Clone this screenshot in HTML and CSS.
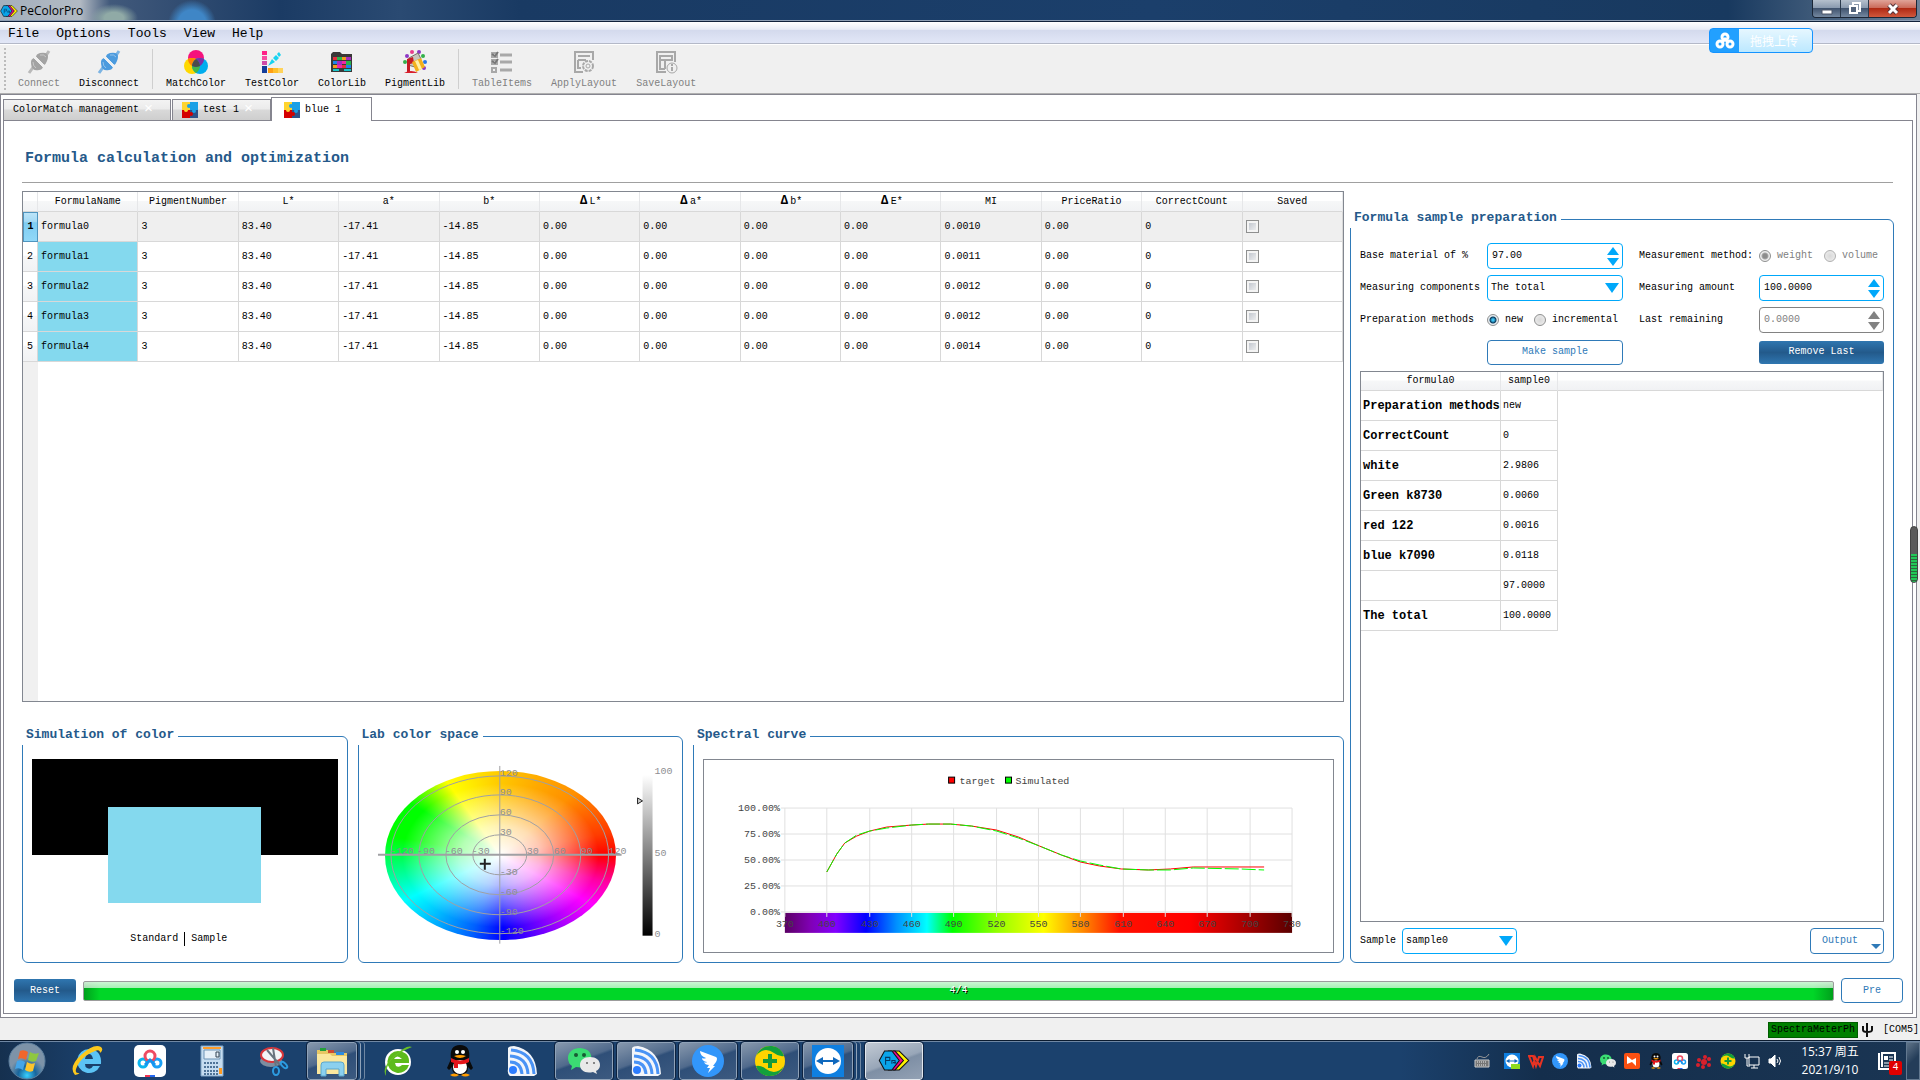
FILE: index.html
```html
<!doctype html>
<html lang="en">
<head>
    <meta charset="utf-8">
    <title>PeColorPro</title>
    <link rel="stylesheet" href="styles.css">
</head>

<body>
<!-- shared icons -->
<svg class="defs" width="0" height="0" aria-hidden="true">
    <symbol id="i-app" viewBox="0 0 30 20">
        <path d="M15 1h5l9 9-9 9h-5l8-9z" fill="#fff200" stroke="#111"/>
        <path d="M10 1h6l8 9-8 9h-6l8-9z" fill="#ec0a8c" stroke="#111"/>
        <path d="M6 1h7l7 9-7 9H6L1 10z" fill="#0aa5ea" stroke="#111"/>
        <path d="M7 14V7h4v3H7M13 13v-3h3v3M14 12h3" fill="none" stroke="#063a63"/>
    </symbol>
    <symbol id="i-puzzle" viewBox="0 0 16 16">
        <path d="M0 0h8v8H0z" fill="#ffd42e"/>
        <path d="M8 0h8v8H8z" fill="#1ba1e6"/>
        <path d="M0 8h8v8H0z" fill="#d40000"/>
        <path d="M8 8h8v8H8z" fill="#2f5288"/>
        <circle cx="7" cy="4" r="2" fill="#1ba1e6"/>
        <circle cx="12" cy="9" r="2" fill="#1ba1e6"/>
        <circle cx="4" cy="8" r="2" fill="#ffd42e"/>
        <circle cx="9" cy="12" r="2" fill="#d40000"/>
    </symbol>
    <symbol id="i-plug" viewBox="0 0 24 24">
        <path d="M2 23l5-7M18 7l4-6" stroke="currentColor" stroke-width="3" opacity=".7"/>
        <path d="M4 12q0-3 3-4l9 9q-1 3-4 3-4 1-6-1t-2-7z" fill="currentColor"/>
        <path d="M9 7q0-3 4-4 5-1 7 1t0 7q-1 3-3 4z" fill="currentColor"/>
        <path d="M7 8l9 9M9 7l8 8" stroke="#fff" opacity=".7"/>
        <path d="M6 12q0 4 3 6M13 5q4-1 6 2" stroke="#fff" fill="none" opacity=".4"/>
    </symbol>
    <symbol id="i-wave" viewBox="0 0 32 32">
        <path d="M2 3Q3 1 8 1Q30 5 31 29L28 31H4Q1 29 2 24z" fill="#f4f6fa"/>
        <circle cx="7" cy="25" r="4" fill="#2d7dff"/>
        <path d="M4 17q11 0 12 12M4 11q17 1 18 18M5 5q22 2 23 24" fill="none" stroke="#4a93f5" stroke-width="3"/>
    </symbol>
    <symbol id="i-wechat" viewBox="0 0 32 28">
        <path d="M12 1C5 1 0 5 0 11q0 5 4 8l-1 4 5-3q12 2 15-6Q25 2 12 1z" fill="#3bdc73"/>
        <circle cx="8" cy="8" r="2" fill="#175c33"/><circle cx="16" cy="8" r="2" fill="#175c33"/>
        <path d="M22 10c-6 0-10 3-10 8s5 9 13 7l4 2-1-3q4-2 4-6c0-5-4-8-10-8z" fill="#e9e9e9"/>
        <circle cx="19" cy="16" r="1" fill="#666"/><circle cx="26" cy="16" r="1" fill="#666"/>
    </symbol>
    <symbol id="i-ding" viewBox="0 0 32 32">
        <circle cx="16" cy="16" r="16" fill="#3296fa"/>
        <path d="M8 6l16 6q2 1 0 5l-3 4h2l-7 7 2-5h-3l2-3q-4 0-5-3 2 1 3 0-5-1-5-4 2 1 4 0Q8 11 8 6z" fill="#fff"/>
    </symbol>
    <symbol id="i-360" viewBox="0 0 32 32">
        <circle cx="16" cy="16" r="15" fill="#ffd400"/>
        <path d="M2 11Q7 0 18 1q9 1 12 10-5 1-10-3Q10 1 2 11zM30 21Q25 32 14 31 5 30 2 21q5-1 10 3 10 7 18-3z" fill="#13a03c"/>
        <path d="M16 9v14M9 16h14" stroke="#159a3c" stroke-width="4"/>
    </symbol>
    <symbol id="i-tv" viewBox="0 0 32 32">
        <path d="M0 0h32v32H0z" fill="#0f7fe0"/>
        <circle cx="16" cy="16" r="13" fill="#fff"/>
        <path d="M4 16l7-4v3h10v-3l7 4-7 4v-3H11v3z" fill="#0f68bd"/>
    </symbol>
    <symbol id="i-baidu" viewBox="0 0 32 32">
        <rect width="32" height="32" rx="5" fill="#fff"/>
        <g fill="none" stroke-width="3">
            <circle cx="9" cy="18" r="4" stroke="#0cb5ee"/>
            <circle cx="23" cy="18" r="4" stroke="#1ba0f5"/>
            <circle cx="16" cy="11" r="5" stroke="#ee4b62"/>
            <path d="M11 20l5-5 5 5" stroke="#1494f0"/>
        </g>
        <path d="M11 30h5v2h-5z" fill="#ee3352"/><path d="M16 30h5v2h-5z" fill="#2367f0"/>
    </symbol>
    <symbol id="i-qq" viewBox="0 0 26 32">
        <path d="M4 14Q2 0 13 0t9 14l4 9-2 2-3-3q0 8-8 8T5 22l-3 3-2-2z" fill="#0a0a0a"/>
        <ellipse cx="13" cy="22" rx="7" ry="7" fill="#fff"/>
        <circle cx="10" cy="7" r="2" fill="#fff"/><circle cx="16" cy="7" r="2" fill="#fff"/>
        <path d="M7 11q6-2 12 0-6 4-12 0zM3 30q4-3 9 0-4 3-9 0zM14 30q5-3 9 0-5 3-9 0z" fill="#ff9c00"/>
        <path d="M4 13q9 5 18 0v4q-5 3-11 2v4H7v-5l-3-1z" fill="#e5151b"/>
    </symbol>
</svg>

<header class="titlebar">
    <svg class="app-icon" width="18" height="14"><use href="#i-app"/></svg>
    <h1 class="app-name">PeColorPro</h1>
    <div class="win-buttons">
        <button class="win-btn" aria-label="Minimize"><svg width="12" height="12"><path d="M1 7h10v4H1z" fill="#fff" stroke="#4a5568"/></svg></button>
        <button class="win-btn" aria-label="Restore"><svg width="14" height="13"><path d="M5 1h7v8H5z" fill="#8795a8" stroke="#fff" stroke-width="2"/><path d="M2 4h7v7H2z" fill="#53647c" stroke="#fff" stroke-width="2"/></svg></button>
        <button class="win-btn win-close" aria-label="Close"><svg width="12" height="12"><path d="M2 2l8 8M10 2l-8 8" stroke="#56343a" stroke-width="5"/><path d="M2 2l8 8M10 2l-8 8" stroke="#fff" stroke-width="3"/></svg></button>
    </div>
</header>

<nav class="menubar">
    <button>File</button>
    <button>Options</button>
    <button>Tools</button>
    <button>View</button>
    <button>Help</button>
</nav>

<div class="toolbar">
    <span class="grip"></span>
    <button class="tool tool-off" disabled><svg width="24" height="24" color="#a3a3a3"><use href="#i-plug"/></svg>Connect</button>
    <button class="tool"><svg width="24" height="24" color="#4c9bde"><use href="#i-plug"/></svg>Disconnect</button>
    <span class="sep"></span>
    <button class="tool">
        <svg width="24" height="24" viewBox="0 0 24 24">
            <circle cx="12" cy="8" r="8" fill="#f5127c"/>
            <circle cx="8" cy="16" r="8" fill="#ffd800"/>
            <circle cx="16" cy="16" r="8" fill="#00adee"/>
            <path d="M4 9q4-2 8 0-4 3-4 7-4-3-4-7z" fill="#ff8500"/>
            <path d="M12 9q4-2 8 0 0 4-4 7 0-4-4-7z" fill="#7a30a8"/>
            <path d="M8 16q4 1 8 0 0 4-4 7-4-3-4-7z" fill="#42b649"/>
            <path d="M12 9q4 3 4 7-4 2-8 0 0-4 4-7z" fill="#4d4a4c"/>
        </svg>MatchColor
    </button>
    <button class="tool">
        <svg width="24" height="24" viewBox="0 0 24 24">
            <path d="M2 1h5v4H2z" fill="#ff2087"/><path d="M2 6h5v4H2z" fill="#f64ba0"/><path d="M2 11h5v4H2z" fill="#d04ba8"/>
            <path d="M2 16h5v7H2z" fill="#143d9a"/><path d="M8 18h5v5H8z" fill="#ff9e12"/><path d="M13 18h5v5h-5z" fill="#ffc02a"/><path d="M18 18h5v5h-5z" fill="#ffd35a"/>
            <path d="M8 16l4-7 3 3zM13 8l3-3 3 3-3 3zM17 4l2-2 2 3-2 2z" fill="#18d3f0"/>
        </svg>TestColor
    </button>
    <button class="tool">
        <svg width="24" height="24" viewBox="0 0 24 24">
            <path d="M1 4l2-2h7l2 2h10v18H1z" fill="#3b3838"/>
            <path d="M3 7h4v3H3zM12 15h4v3h-4z" fill="#e52c3e"/><path d="M7 7h5v3H7zM16 11h5v4h-5z" fill="#28b34b"/>
            <path d="M12 7h4v3h-4zM3 15h4v3H3z" fill="#f49a1b"/><path d="M16 7h5v3h-5zM7 11h5v4H7z" fill="#a52cc0"/>
            <path d="M3 11h4v3H3zM16 15h5v3h-5z" fill="#1d85e8"/><path d="M12 11h4v3h-4zM7 15h5v3H7z" fill="#f227a4"/>
            <path d="M3 19h6v2H3zM14 19h7v2h-7z" fill="#18c6c8"/>
        </svg>ColorLib
    </button>
    <button class="tool">
        <svg width="24" height="24" viewBox="0 0 24 24">
            <g fill="#33b04a"><circle cx="2" cy="12" r="2"/><circle cx="20" cy="6" r="2"/></g>
            <g fill="#8d37c6"><circle cx="4" cy="6" r="2"/><circle cx="16" cy="2" r="2"/><circle cx="21" cy="18" r="2"/></g>
            <circle cx="22" cy="12" r="2" fill="#2a77e8"/><circle cx="9" cy="2" r="2" fill="#e93d8c"/>
            <path d="M6 8l9-5 3 6-6 8-7-2z" fill="#c9c5be" stroke="#77716a"/>
            <path d="M4 9l6-2 1 6-4 1v8H4z" fill="#c51a24"/>
            <path d="M9 12l9-4 4 9-9 5z" fill="#f3b01c"/><path d="M12 11l3-1 4 9-3 1z" fill="#fff0a8"/>
            <path d="M1 23q7-4 14 0z" fill="#d81e2a"/>
        </svg>PigmentLib
    </button>
    <span class="sep"></span>
    <button class="tool tool-off" disabled>
        <svg width="24" height="24" viewBox="0 0 24 24" fill="none" stroke="#a8a8a8" stroke-width="2">
            <path d="M10 5h12M10 12h12M10 20h12" stroke-width="3"/><path d="M2 3h5v4H2zM2 10h5v4H2zM2 18h4v4H2z"/><path d="M2 4l3 2 3-4M2 11l3 2 3-4" stroke="#777"/>
        </svg>TableItems
    </button>
    <button class="tool tool-off" disabled>
        <svg width="24" height="24" viewBox="0 0 24 24" fill="none" stroke="#a8a8a8" stroke-width="2">
            <path d="M11 22H3V2h18v8M6 6h12M6 10h8M6 10v8h3"/><circle cx="16" cy="16" r="5" stroke-dasharray="3 1"/><circle cx="16" cy="16" r="2" stroke-width="1"/>
        </svg>ApplyLayout
    </button>
    <button class="tool tool-off" disabled>
        <svg width="24" height="24" viewBox="0 0 24 24" fill="none" stroke="#a8a8a8" stroke-width="2">
            <path d="M12 22H3V2h18v10M6 6h12v4H6zM6 11v8h5M11 10v9"/><circle cx="18" cy="18" r="5" stroke-width="1"/><path d="M18 14v2M18 17v4"/>
        </svg>SaveLayout
    </button>
</div>

<main class="workspace">
    <div class="tabs" role="tablist">
        <button class="tab" role="tab">ColorMatch management <span class="tab-x">×</span></button>
        <button class="tab" role="tab"><svg width="16" height="16"><use href="#i-puzzle"/></svg>test 1 <span class="tab-x">×</span></button>
        <button class="tab tab-on" role="tab" aria-selected="true"><svg width="16" height="16"><use href="#i-puzzle"/></svg>blue 1</button>
    </div>

    <section class="pane">
        <h2 class="pane-title">Formula calculation and optimization</h2>

        <div class="columns">
            <div class="left">
                <div class="grid-frame">
                    <table class="formulas">
                        <thead>
                        <tr>
                            <th class="num"></th><th>FormulaName</th><th>PigmentNumber</th><th>L*</th><th>a*</th><th>b*</th>
                            <th><span class="delta">Δ</span>L*</th><th><span class="delta">Δ</span>a*</th><th><span class="delta">Δ</span>b*</th><th><span class="delta">Δ</span>E*</th>
                            <th>MI</th><th>PriceRatio</th><th>CorrectCount</th><th>Saved</th>
                        </tr>
                        </thead>
                        <tbody>
                        <tr class="current"><th class="num">1</th><td>formula0</td><td>3</td><td>83.40</td><td>-17.41</td><td>-14.85</td><td>0.00</td><td>0.00</td><td>0.00</td><td>0.00</td><td>0.0010</td><td>0.00</td><td>0</td><td><input type="checkbox" aria-label="formula0 saved"></td></tr>
                        <tr><th class="num">2</th><td class="swatch">formula1</td><td>3</td><td>83.40</td><td>-17.41</td><td>-14.85</td><td>0.00</td><td>0.00</td><td>0.00</td><td>0.00</td><td>0.0011</td><td>0.00</td><td>0</td><td><input type="checkbox" aria-label="formula1 saved"></td></tr>
                        <tr><th class="num">3</th><td class="swatch">formula2</td><td>3</td><td>83.40</td><td>-17.41</td><td>-14.85</td><td>0.00</td><td>0.00</td><td>0.00</td><td>0.00</td><td>0.0012</td><td>0.00</td><td>0</td><td><input type="checkbox" aria-label="formula2 saved"></td></tr>
                        <tr><th class="num">4</th><td class="swatch">formula3</td><td>3</td><td>83.40</td><td>-17.41</td><td>-14.85</td><td>0.00</td><td>0.00</td><td>0.00</td><td>0.00</td><td>0.0012</td><td>0.00</td><td>0</td><td><input type="checkbox" aria-label="formula3 saved"></td></tr>
                        <tr><th class="num">5</th><td class="swatch">formula4</td><td>3</td><td>83.40</td><td>-17.41</td><td>-14.85</td><td>0.00</td><td>0.00</td><td>0.00</td><td>0.00</td><td>0.0014</td><td>0.00</td><td>0</td><td><input type="checkbox" aria-label="formula4 saved"></td></tr>
                        </tbody>
                    </table>
                </div>

                <div class="charts">
                    <fieldset class="box">
                        <legend>Simulation of color</legend>
                        <div class="sim">
                            <div class="sim-back"></div>
                            <div class="sim-front"></div>
                            <p class="sim-label"><span>Standard</span><span>Sample</span></p>
                        </div>
                    </fieldset>

                    <fieldset class="box">
                        <legend>Lab color space</legend>
                        <div class="lab">
                            <div class="wheel"></div>
                            <svg class="lab-axes" viewBox="0 0 324 224">
                                <defs>
                                    <linearGradient id="grey" x2="0" y2="1"><stop offset="0" stop-color="#fff"/><stop offset="1" stop-color="#000"/></linearGradient>
                                </defs>
                                <g fill="none" stroke="#a0a0a4">
                                    <ellipse cx="141" cy="119" rx="109" ry="79"/><ellipse cx="141" cy="119" rx="81" ry="60"/>
                                    <ellipse cx="141" cy="119" rx="54" ry="40"/><ellipse cx="141" cy="119" rx="27" ry="20"/>
                                    <path d="M19 119h244" stroke-width="2"/><path d="M141 30v178"/>
                                </g>
                                <g class="lab-text">
                                    <text x="141" y="40">120</text><text x="141" y="59">90</text><text x="141" y="79">60</text><text x="141" y="99">30</text>
                                    <text x="141" y="139">-30</text><text x="141" y="159">-60</text><text x="141" y="179">-90</text><text x="141" y="198">-120</text>
                                    <text x="31" y="118">-120</text><text x="58" y="118">-90</text><text x="86" y="118">-60</text><text x="113" y="118">-30</text>
                                    <text x="168" y="118">30</text><text x="195" y="118">60</text><text x="222" y="118">90</text><text x="250" y="118">120</text>
                                    <text x="296" y="38">100</text><text x="296" y="120">50</text><text x="296" y="201">0</text>
                                </g>
                                <path d="M126 123v11M121 128h11" stroke="#222" stroke-width="2"/>
                                <rect x="284" y="39" width="10" height="161" fill="url(#grey)"/>
                                <path d="M279 62l5 3-5 3z" fill="#ccc" stroke="#222"/>
                            </svg>
                        </div>
                    </fieldset>

                    <fieldset class="box">
                        <legend>Spectral curve</legend>
                        <div class="spectral">
                            <svg class="curve" viewBox="0 0 630 192">
                                <defs>
                                    <linearGradient id="rainbow">
                                        <stop offset="0" stop-color="#5a0064"/><stop offset=".05" stop-color="#8000b4"/><stop offset=".1" stop-color="#8200ff"/><stop offset=".16" stop-color="#0000ff"/>
                                        <stop offset=".22" stop-color="#0090ff"/><stop offset=".28" stop-color="#00ffff"/><stop offset=".33" stop-color="#00ff00"/><stop offset=".42" stop-color="#96ff00"/>
                                        <stop offset=".51" stop-color="#ffff00"/><stop offset=".58" stop-color="#ff9600"/><stop offset=".66" stop-color="#ff1000"/><stop offset=".8" stop-color="#ff0000"/>
                                        <stop offset="1" stop-color="#5a0000"/>
                                    </linearGradient>
                                </defs>
                                <rect x="245" y="17" width="6" height="6" fill="#f00" stroke="#000"/><text x="256" y="24">target</text>
                                <rect x="302" y="17" width="6" height="6" fill="#0f0" stroke="#000"/><text x="312" y="24">Simulated</text>
                                <rect x="81" y="153" width="508" height="20" fill="url(#rainbow)"/>
                                <path class="rules" d="M77 48h512M77 74h512M77 100h512M77 126h512M77 152h512M81 48v109M123 48v109M166 48v109M208 48v109M250 48v109M293 48v109M335 48v109M377 48v109M420 48v109M462 48v109M504 48v109M547 48v109M589 48v109"/>
                                <g text-anchor="end"><text x="76" y="51">100.00%</text><text x="76" y="77">75.00%</text><text x="76" y="103">50.00%</text><text x="76" y="129">25.00%</text><text x="76" y="155">0.00%</text></g>
                                <g text-anchor="middle">
                                    <text x="81" y="167">370</text><text x="123" y="167">400</text><text x="166" y="167">430</text><text x="208" y="167">460</text><text x="250" y="167">490</text>
                                    <text x="293" y="167">520</text><text x="335" y="167">550</text><text x="377" y="167">580</text><text x="420" y="167">610</text><text x="462" y="167">640</text>
                                    <text x="504" y="167">670</text><text x="547" y="167">700</text><text x="589" y="167">730</text>
                                </g>
                                <path d="M123 112L133 94L141 83L153 76L166 71L183 67L208 65L225 64L247 64L268 66L293 70L315 77L336 86L358 95L377 102L396 106L418 109L445 110L467 109L490 107L561 107" fill="none" stroke="#f00"/>
                                <path d="M123 112L133 94L141 83L153 75L166 71L183 68L208 65L225 64L247 64L268 66L293 71L315 78L336 86L358 95L377 101L396 105L418 109L445 110L467 110L490 108L537 109L561 110" fill="none" stroke="#0f0" stroke-dasharray="14 3"/>
                            </svg>
                        </div>
                    </fieldset>
                </div>
            </div>

            <fieldset class="box sample-box">
                <legend>Formula sample preparation</legend>
                <div class="sample">
                    <form class="form">
                        <label for="base">Base material of %</label>
                        <div class="spin"><input id="base" type="text" value="97.00"><button type="button" class="up" aria-label="Increase"></button><button type="button" class="down" aria-label="Decrease"></button></div>
                        <span class="second">Measurement method:</span>
                        <div class="radios">
                            <input type="radio" name="method" id="weight" checked disabled><label for="weight">weight</label>
                            <input type="radio" name="method" id="volume" disabled><label for="volume">volume</label>
                        </div>

                        <label for="components">Measuring components</label>
                        <div class="pick"><select id="components"><option>The total</option></select></div>
                        <label class="second" for="amount">Measuring amount</label>
                        <div class="spin"><input id="amount" type="text" value="100.0000"><button type="button" class="up" aria-label="Increase"></button><button type="button" class="down" aria-label="Decrease"></button></div>

                        <span>Preparation methods</span>
                        <div class="radios">
                            <input type="radio" name="prep" id="new" checked><label for="new">new</label>
                            <input type="radio" name="prep" id="incremental"><label for="incremental">incremental</label>
                        </div>
                        <label class="second" for="remaining">Last remaining</label>
                        <div class="spin spin-off"><input id="remaining" type="text" value="0.0000" disabled><button type="button" class="up" aria-label="Increase" disabled></button><button type="button" class="down" aria-label="Decrease" disabled></button></div>

                        <span></span>
                        <button type="button" class="btn">Make sample</button>
                        <span></span>
                        <button type="button" class="btn btn-solid">Remove Last</button>
                    </form>

                    <div class="sample-frame">
                        <table class="samples">
                            <thead><tr><th>formula0</th><th>sample0</th><th></th></tr></thead>
                            <tbody>
                            <tr><th>Preparation methods</th><td>new</td></tr>
                            <tr><th>CorrectCount</th><td>0</td></tr>
                            <tr><th>white</th><td>2.9806</td></tr>
                            <tr><th>Green k8730</th><td>0.0060</td></tr>
                            <tr><th>red 122</th><td>0.0016</td></tr>
                            <tr><th>blue k7090</th><td>0.0118</td></tr>
                            <tr><th></th><td>97.0000</td></tr>
                            <tr><th>The total</th><td>100.0000</td></tr>
                            </tbody>
                        </table>
                    </div>

                    <div class="sample-foot">
                        <label for="sample">Sample</label>
                        <div class="pick"><select id="sample"><option>sample0</option></select></div>
                        <button class="btn output">Output</button>
                    </div>
                </div>
            </fieldset>
        </div>

        <div class="progress-row">
            <button class="btn btn-solid">Reset</button>
            <div class="progress" role="progressbar" aria-valuemin="0" aria-valuemax="4" aria-valuenow="4" aria-label="Formulas">4/4</div>
            <button class="btn">Pre</button>
        </div>
    </section>
</main>

<footer class="statusbar">
    <span class="device">SpectraMeterPh</span>
    <svg width="11" height="14" viewBox="0 0 11 14" fill="none" stroke="#111" stroke-width="2"><path d="M5 0v14M1 3v4q0 2 4 2 5 0 5-2V3"/></svg>
    <span class="port">[COM5]</span>
</footer>

<div class="taskbar">
    <button class="start" aria-label="Start">
        <svg width="38" height="38" viewBox="0 0 38 38">
            <defs><radialGradient id="orb" cy=".9"><stop offset="0" stop-color="#38d0ff"/><stop offset=".5" stop-color="#18659c"/><stop offset="1" stop-color="#7d93a8"/></radialGradient></defs>
            <circle cx="19" cy="19" r="18" fill="url(#orb)" stroke="#5d7f9e"/>
            <path d="M12 9q4-2 8 1l-2 8q-4-3-8-1z" fill="#f0662c"/><path d="M22 10q4 3 9 1l-3 8q-4 2-8-1z" fill="#8fc73f"/>
            <path d="M9 19q4-2 8 1l-2 8q-4-3-8-1z" fill="#45a5e8"/><path d="M19 20q4 3 8 1l-2 8q-4 2-8-1z" fill="#fdc52c"/>
        </svg>
    </button>
    <button class="task" aria-label="Internet Explorer">
        <svg width="32" height="32" viewBox="0 0 32 32"><path d="M17 4A12 12 0 1 0 28 21H21q-2 4-6 2-2-1-2-4h16Q30 5 17 4zM13 14q1-5 4-5t4 5z" fill="#5cc3f5"/><path d="M3 30Q-4 22 9 10T29 2Q32 5 28 8 28 4 23 6 12 10 7 18 1 28 6 28 10 28 3 30z" fill="#fcc81c"/></svg>
    </button>
    <button class="task" aria-label="Netdisk"><svg width="32" height="32"><use href="#i-baidu"/></svg></button>
    <button class="task" aria-label="Calculator">
        <svg width="32" height="32" viewBox="0 0 32 32"><path d="M5 1h22v30H5z" fill="#c5dcf0" stroke="#7ea3c4"/><path d="M8 5h16v9H8z" fill="#e6f0f8" stroke="#6d93b5"/><path d="M7 2h18v2H7z" fill="#ff9d2b"/><path d="M20 7h3v5h-3z" fill="none" stroke="#345"/><path d="M8 18h15M8 22h15M8 26h15M8 29h15" stroke="#4f7498" stroke-width="2" stroke-dasharray="2 1"/><path d="M23 23h3v6h-3z" fill="#ff9a20"/></svg>
    </button>
    <button class="task" aria-label="Snipping Tool">
        <svg width="32" height="32" viewBox="0 0 32 32"><ellipse cx="13" cy="16" rx="11" ry="6" fill="#7d8da0"/><ellipse cx="14" cy="10" rx="11" ry="7" fill="#f2f4f6" stroke="#d8353a" stroke-width="2"/><path d="M9 5l13 15M15 3l3 19" stroke="#69737d" stroke-width="2"/><ellipse cx="26" cy="20" rx="2" ry="4" transform="rotate(-45 26 20)" fill="none" stroke="#2c9be0" stroke-width="2"/><ellipse cx="18" cy="26" rx="3" ry="4" fill="none" stroke="#2c9be0" stroke-width="2"/></svg>
    </button>
    <button class="task open stack" aria-label="Explorer">
        <svg width="32" height="32" viewBox="0 0 32 32"><path d="M1 5h12l2 3h16v20H1z" fill="#e8c864"/><path d="M4 3h6v3H4z" fill="#24a03a"/><path d="M12 5h6v3h-6z" fill="#cf4a31"/><path d="M20 7h8v3h-8z" fill="#2d8be0"/><path d="M1 9h13l2 2h15v18H1z" fill="#fbe79e"/><path d="M5 31V20q0-3 3-3h17q3 0 3 3v11h-5v-7H10v7z" fill="#8bd0ef" stroke="#5aa6cd"/></svg>
    </button>
    <button class="task" aria-label="Browser">
        <svg width="32" height="32" viewBox="0 0 32 32"><circle cx="16" cy="17" r="13" fill="#fff"/><path d="M16 6a11 11 0 1 0 11 14h-7q-3 3-6 1l-1-3h14Q28 7 16 6zM12 14q3-5 8 0z" fill="#5dbb1c"/><path d="M4 31Q-1 23 12 11T30 2Q14 8 7 18q-4 8-3 13z" fill="#69c026"/></svg>
    </button>
    <button class="task" aria-label="QQ"><svg width="32" height="32"><use href="#i-qq"/></svg></button>
    <button class="task" aria-label="Screen share"><svg width="32" height="32"><use href="#i-wave"/></svg></button>
    <button class="task open" aria-label="WeChat"><svg width="32" height="32"><use href="#i-wechat"/></svg></button>
    <button class="task open" aria-label="Screen share"><svg width="32" height="32"><use href="#i-wave"/></svg></button>
    <button class="task open" aria-label="DingTalk"><svg width="32" height="32"><use href="#i-ding"/></svg></button>
    <button class="task open" aria-label="360"><svg width="32" height="32"><use href="#i-360"/></svg></button>
    <button class="task open stack" aria-label="TeamViewer"><svg width="32" height="32"><use href="#i-tv"/></svg></button>
    <button class="task open active" aria-label="PeColorPro"><svg width="32" height="21"><use href="#i-app"/></svg></button>

    <div class="tray">
        <svg class="keyboard" width="16" height="16" viewBox="0 0 16 16"><path d="M1 7h14v7H1z" fill="#777" stroke="#ccc"/><path d="M3 9h10M3 12h10" stroke="#eee" stroke-dasharray="1 1"/><path d="M3 6q1-4 5-2t7-3" fill="none" stroke="#999"/></svg>
        <svg width="16" height="16"><use href="#i-tv"/><path d="M7 11h9v5H7z" fill="#8fdc1e"/></svg>
        <svg width="16" height="16" viewBox="0 0 16 16" fill="none" stroke="#e83323" stroke-width="2"><path d="M1 3h4l3 10 3-9h4l-3 9-5-9-2 9z"/></svg>
        <svg width="16" height="16"><use href="#i-ding"/></svg>
        <svg width="16" height="16"><use href="#i-wave"/></svg>
        <svg width="16" height="16"><use href="#i-wechat"/></svg>
        <svg width="16" height="16" viewBox="0 0 16 16"><rect width="16" height="16" rx="2" fill="#fb5012"/><path d="M3 3l5 4 4-2v8L8 9l-5 2z" fill="#fff"/></svg>
        <svg width="16" height="16"><use href="#i-qq"/></svg>
        <svg width="16" height="16"><use href="#i-baidu"/></svg>
        <svg width="16" height="16" viewBox="0 0 16 16" fill="#d8202c"><circle cx="8" cy="9" r="3"/><circle cx="3" cy="7" r="2"/><circle cx="2" cy="12" r="2"/><circle cx="7" cy="14" r="2"/><circle cx="13" cy="12" r="2"/><circle cx="13" cy="6" r="2"/><circle cx="9" cy="4" r="2"/></svg>
        <svg width="16" height="16"><use href="#i-360"/></svg>
        <svg width="16" height="16" viewBox="0 0 16 16" fill="none" stroke="#fff"><path d="M5 4h10v8H5zM7 15h7M10 12v3M1 1v4h4V1M3 5v8h3"/></svg>
        <svg width="16" height="16" viewBox="0 0 16 16" fill="none" stroke="#fff"><path d="M1 6h2l4-4v12l-4-4H1z" fill="#fff"/><path d="M9 6q2 2 0 4M11 4q3 4 0 8"/></svg>
    </div>
    <time class="clock" datetime="2021-09-10T15:37"><span>15:37 周五</span><span>2021/9/10</span></time>
    <div class="notice">
        <svg width="18" height="18" viewBox="0 0 18 18"><path d="M1 1v16h16V1H4v14" fill="none" stroke="#fff" stroke-width="2"/><path d="M6 4h4v4H6z" fill="#fff"/><path d="M11 5h4M11 8h4M6 11h9M6 14h6" stroke="#fff"/></svg>
        <span class="badge">4</span>
    </div>
    <button class="show-desktop" aria-label="Show desktop"></button>
</div>

<!-- floating widgets -->
<button class="upload">
    <svg width="20" height="18" viewBox="0 0 20 18" fill="none" stroke="#fff" stroke-width="3"><circle cx="10" cy="5" r="3"/><circle cx="5" cy="12" r="3"/><circle cx="15" cy="12" r="3"/><path d="M7 10l3-3 3 3"/></svg>
    <span>拖拽上传</span>
</button>
<div class="meter"></div>
</body>
</html>
```

FILE: styles.css
```css
* {
    box-sizing: border-box;
}

body {
    margin: 0;
    min-height: 100vh;
    display: flex;
    flex-direction: column;
    position: relative;
    background: #f0f0f0;
    color: #000;
    font: 10px/14px "Liberation Mono", "Noto Sans CJK SC", monospace;
}

button,
input,
select {
    font: inherit;
    color: inherit;
    margin: 0;
}

button {
    padding: 0;
    border: 0;
    background: none;
}

.defs {
    position: absolute;
}

/* title bar */
.titlebar {
    display: flex;
    align-items: center;
    height: 22px;
    border-bottom: 1px solid #10213a;
    box-shadow: inset 0 -1px #8c9db3;
    background:
        radial-gradient(circle at 192px 24px, #3f86c6 14px, transparent 24px),
        radial-gradient(ellipse 24px 14px at 114px 18px, #90aaa6 40%, transparent),
        linear-gradient(90deg, #a4afbc, #b2bac3 80px, #41597b 110px, #1b3b64 280px, #2a4a72 400px, #193a63 520px, #1b3f6b 60%, #18395f 90%, #6d8299);
}

.app-icon {
    margin: 0 2px 0 0;
}

.app-name {
    margin: 0;
    font: 12px/16px "Open Sans", sans-serif;
}

.win-buttons {
    display: flex;
    align-self: flex-start;
    margin: 0 3px 0 auto;
    border: 1px solid #1b2636;
    border-top: 0;
    border-radius: 0 0 4px 4px;
    overflow: hidden;
}

.win-btn {
    display: grid;
    place-items: center;
    width: 28px;
    height: 17px;
    border-right: 1px solid #2b3a4d;
    background: linear-gradient(#b5c0cd, #8b9bb0 45%, #41546f 50%, #7488a0);
}

.win-close {
    width: 47px;
    border-right: 0;
    background: linear-gradient(#e0a398, #cb6b5b 45%, #b02a14 50%, #d0583c);
}

/* menu and tool bar */
.menubar {
    display: flex;
    gap: 1px;
    height: 22px;
    border-bottom: 1px solid #b4b9c8;
    background: linear-gradient(#fff, #e8ecf6 35%, #d4daed 40%, #e2e7f7);
    font-size: 13px;
}

.menubar button {
    padding: 3px 8px 0;
}

.toolbar {
    display: flex;
    align-items: center;
    gap: 1px;
    height: 50px;
    padding: 0 4px;
    border-top: 1px solid #fff;
    border-bottom: 1px solid #b0b0b0;
}

.grip {
    width: 2px;
    height: 42px;
    margin-right: 2px;
    border-left: 2px dotted #bcbcbc;
}

.tool {
    display: flex;
    flex-direction: column;
    align-items: center;
    gap: 3px;
    padding: 2px 9px 0;
}

.tool-off {
    color: #808080;
}

.sep {
    width: 1px;
    height: 40px;
    margin: 0 3px;
    background: #cfcfcf;
}

/* tabs */
.workspace {
    flex: 1;
    display: flex;
    flex-direction: column;
    margin: 0 3px 0 0;
    padding: 1px 3px 3px 2px;
    border: 1px solid #85858f;
    background: #fff;
}

.tabs {
    display: flex;
    align-items: flex-end;
    gap: 1px;
    height: 24px;
}

.tab {
    display: flex;
    align-items: center;
    gap: 5px;
    height: 21px;
    padding: 0 17px 0 9px;
    border: 1px solid #85858f;
    border-bottom: 0;
    background: linear-gradient(#f3f3f3, #ebebeb 45%, #d9d9d9 50%, #cecece);
}

.tab-x {
    color: #fff;
    font-size: 15px;
}

.tab-on {
    height: 24px;
    min-width: 101px;
    margin: 0 0 -1px -1px;
    padding: 0 12px;
    background: #fff;
    z-index: 1;
}

.pane {
    flex: 1;
    display: flex;
    flex-direction: column;
    padding: 28px 9px 10px 10px;
    border: 1px solid #85858f;
}

.pane-title {
    margin: 0 10px 8px 8px;
    padding: 0 3px 13px;
    border-bottom: 1px solid #a0a0a0;
    color: #25598a;
    font-size: 15px;
    line-height: 20px;
}

.columns {
    flex: 1;
    display: grid;
    grid-template-columns: minmax(0, 1fr) 544px;
    gap: 6px;
    margin: 0 9px 15px 8px;
}

.left {
    display: flex;
    flex-direction: column;
    gap: 25px;
}

/* formula table */
.grid-frame {
    flex: 1;
    border: 1px solid #828790;
    background: linear-gradient(90deg, #f0f0f0 15px, #fff 15px);
}

table {
    border-collapse: separate;
    border-spacing: 0;
}

th,
td {
    border-right: 1px solid #d8d8d8;
    border-bottom: 1px solid #d8d8d8;
}

thead th {
    height: 20px;
    padding: 0;
    border-right-color: #e6e7e9;
    background: linear-gradient(#fff 45%, #f6f7f8 50%, #f1f2f4);
    font-weight: normal;
}

.formulas {
    width: 100%;
    table-layout: fixed;
}

.formulas td {
    height: 30px;
    padding: 0 3px;
}

.formulas .num {
    width: 15px;
    padding: 0;
    background: linear-gradient(#fff 45%, #f6f7f8 50%, #f1f2f4);
    font-weight: normal;
}

.formulas .current {
    background: #efefef;
}

.formulas .current .num {
    border: 1px solid #4f95bf;
    background: linear-gradient(#bce4f8, #a5daf5 30%, #7fcdf2 35%, #91d8f8);
    font-weight: bold;
}

.formulas .swatch {
    background: #84d9ee;
}

.delta {
    display: inline-block;
    width: 12px;
    font-size: 12px;
    font-weight: bold;
}

input[type="checkbox"] {
    appearance: none;
    display: block;
    width: 13px;
    height: 13px;
    border: 1px solid #8e8f8f;
    background: linear-gradient(135deg, #b8bec8, #f6f6f6);
    box-shadow: inset 0 0 0 2px #f4f4f4;
}

/* group boxes */
.box {
    min-width: 0;
    margin: 0;
    padding: 0;
    border: 1px solid #2f7ab8;
    border-radius: 6px;
}

.box legend {
    margin-left: -1px;
    padding: 0 4px 3px;
    background: #fff;
    color: #25598a;
    font-size: 13px;
    font-weight: bold;
    line-height: 15px;
}

.charts {
    display: grid;
    grid-template-columns: minmax(0, 1fr) minmax(0, 1fr) minmax(0, 2fr);
    gap: 10px;
}

.sim {
    display: grid;
    grid-template: 48px 48px 48px 1fr / 1fr 2fr 1fr;
    height: 217px;
    padding: 14px 9px 0;
}

.sim-back {
    grid-area: 1 / 1 / 3 / 4;
    background: #000;
}

.sim-front {
    grid-area: 2 / 2 / 4 / 3;
    background: #84d9ee;
}

.sim-label {
    grid-area: 4 / 1 / 5 / 4;
    justify-self: center;
    align-self: center;
    display: flex;
    margin: 0;
    padding: 12px 12px 0 0;
}

.sim-label span + span {
    margin-left: 6px;
    padding-left: 6px;
    border-left: 1px solid #000;
}

.lab {
    display: grid;
    grid-template-columns: 1fr;
    justify-items: start;
    height: 217px;
}

.lab > * {
    grid-area: 1 / 1;
}

.wheel {
    width: 231px;
    height: 169px;
    margin: 26px 0 0 26px;
    border-radius: 50%;
    background:
        radial-gradient(closest-side, #fff, rgba(255, 255, 255, .7) 35%, rgba(255, 255, 255, 0) 85%),
        conic-gradient(#ffc800, #ff9000 50deg, #ff3c00 78deg, #f00 90deg, #ff00a0 104deg, #f0f 118deg, #a000ff 140deg, #00f 178deg, #0060ff 200deg, #00a8ff 222deg, #0ff 245deg, #00ff70 265deg, #0f0 280deg, #0f0 300deg, #ff0 324deg, #ffc800);
}

.lab-axes {
    width: 100%;
    margin-top: -9px;
}

.lab-text {
    fill: #8e8e92;
}

.spectral {
    height: 217px;
    padding: 14px 9px 9px;
}

.curve {
    display: block;
    width: 100%;
    height: 100%;
    border: 1px solid #828790;
    fill: #444;
}

.rules {
    fill: none;
    stroke: #e0e0e0;
}

/* sample preparation */
.sample-box {
    display: flex;
    flex-direction: column;
    margin-top: 19px;
}

.sample {
    flex: 1;
    display: flex;
    flex-direction: column;
    gap: 6px;
    padding: 15px 9px 8px;
}

.form {
    display: grid;
    grid-template-columns: 127px 136px 1fr 125px;
    grid-auto-rows: 26px;
    gap: 6px 0;
    align-items: center;
}

.second {
    padding-left: 16px;
}

.spin {
    display: grid;
    grid-template: 1fr 1fr / 1fr 18px;
    height: 26px;
    border: 1px solid #00a8fa;
    border-radius: 4px;
}

.spin input {
    grid-area: 1 / 1 / 3 / 2;
    min-width: 0;
    padding: 0 4px;
    border: 0;
    background: none;
}

.spin button {
    justify-self: center;
    width: 12px;
    height: 8px;
    background: #00a8fa;
}

.up {
    align-self: end;
    margin-bottom: 1px;
    clip-path: polygon(50% 0, 100% 100%, 0 100%);
}

.down {
    align-self: start;
    margin-top: 2px;
    clip-path: polygon(0 0, 100% 0, 50% 100%);
}

.spin-off {
    border-color: #828282;
    color: #808080;
}

.spin-off button {
    background: #828282;
}

.pick {
    display: grid;
    grid-template-columns: 1fr 20px;
    align-items: center;
    height: 26px;
    border: 1px solid #00a8fa;
    border-radius: 4px;
}

.pick select {
    grid-area: 1 / 1 / 2 / 3;
    height: 24px;
    padding: 0 3px;
    border: 0;
    appearance: none;
    background: none;
}

.pick::after {
    content: "";
    grid-area: 1 / 2;
    width: 14px;
    height: 10px;
    margin-left: 3px;
    background: #00a8fa;
    clip-path: polygon(0 0, 100% 0, 50% 100%);
    pointer-events: none;
}

.radios {
    display: flex;
    align-items: center;
}

.radios label {
    margin: 0 11px 0 6px;
    white-space: nowrap;
}

.radios label:last-child {
    margin-right: 0;
}

input[type="radio"] {
    appearance: none;
    flex: none;
    width: 12px;
    height: 12px;
    border: 1px solid #8e8f8f;
    border-radius: 50%;
    background: radial-gradient(#d8d8d8, #f0f0f0);
}

input[type="radio"]:checked {
    background: radial-gradient(#3cc4f5 1px, #0b3a5c 3px, #e8eef2 4px);
}

input[type="radio"]:disabled {
    border-color: #b0b0b0;
}

input[type="radio"]:checked:disabled {
    background: radial-gradient(#8c8c8c 2px, #a8a8a8 3px, #eee 4px);
    border-color: #8e8f8f;
}

input[type="radio"]:disabled + label {
    color: #808080;
}

.btn {
    height: 25px;
    border: 1px solid #2f7ab8;
    border-radius: 4px;
    background: #fff;
    color: #2f7ab8;
}

.btn-solid {
    height: 23px;
    border: 0;
    border-radius: 3px;
    background: linear-gradient(#2f76b0, #235a8b 50%, #2f76b0);
    color: #fff;
}

.sample-frame {
    flex: 1;
    border: 1px solid #828790;
}

.samples {
    width: 100%;
}

.samples thead th {
    height: 19px;
}

.samples thead th:nth-child(1) {
    width: 140px;
}

.samples thead th:nth-child(2) {
    width: 57px;
}

.samples tbody th,
.samples td {
    height: 30px;
    padding: 0 0 0 2px;
    text-align: left;
}

.samples tbody th {
    font-size: 12px;
    white-space: nowrap;
}

.sample-foot {
    display: flex;
    align-items: center;
    gap: 6px;
}

.sample-foot .pick {
    width: 115px;
}

.output {
    width: 74px;
    height: 26px;
    margin-left: auto;
    padding-right: 2px;
    display: flex;
    align-items: center;
    justify-content: flex-end;
    gap: 13px;
}

.output::after {
    content: "";
    align-self: flex-end;
    margin-bottom: 4px;
    border: 5px solid transparent;
    border-top-color: #2f7ab8;
    border-bottom: 0;
}

/* progress */
.progress-row {
    display: flex;
    align-items: center;
    gap: 7px;
}

.progress-row .btn {
    width: 62px;
}

.progress {
    flex: 1;
    height: 20px;
    border: 1px solid #9c9c9c;
    border-radius: 2px;
    background:
        linear-gradient(rgba(255, 255, 255, .8), rgba(255, 255, 255, .65) 6px, transparent 6px),
        linear-gradient(90deg, #00a01c, #00d627 16px, #00d627 calc(100% - 20px), #00a01c);
    color: #fff;
    line-height: 18px;
    text-align: center;
    text-shadow: 1px 1px #000;
}

/* status bar */
.statusbar {
    display: flex;
    align-items: center;
    justify-content: flex-end;
    gap: 4px;
    height: 22px;
    padding: 1px 1px 0 0;
}

.port {
    padding-left: 6px;
}

.device {
    padding: 0 2px;
    border: 1px solid #005c00;
    background: #008000;
}

/* taskbar */
.taskbar {
    display: flex;
    align-items: center;
    gap: 4px;
    height: 40px;
    padding-left: 8px;
    border-top: 1px solid #0b1b2f;
    box-shadow: inset 0 1px #6f87a3;
    background: linear-gradient(90deg, #15304f, #1b416d 100px, #1b416d 1400px, #142e4c 1540px, #1a3553);
}

.start svg,
.task svg {
    display: block;
}

.start {
    margin-right: 9px;
}

.task {
    display: grid;
    place-items: center;
    width: 58px;
    height: 38px;
}

.open {
    border: 1px solid #8fa2b8;
    border-radius: 3px;
    outline: 1px solid #0e2340;
    background: linear-gradient(160deg, #8798ad, #506a8c 45%, #2f4f78 50%, #3c5a80);
}

.stack {
    width: 50px;
    margin-right: 8px;
    box-shadow: 3px 0 #1b416d, 4px 0 #8fa2b8, 7px 0 #1b416d, 8px 0 #6f87a3;
}

.active {
    background: linear-gradient(160deg, #c2cad4, #98a6b8 50%, #7e8fa5 55%, #93a1b4);
    border-color: #e2e7ed;
}

.tray {
    display: flex;
    gap: 8px;
    margin-left: auto;
}

.keyboard {
    margin-right: 6px;
}

.clock {
    display: flex;
    flex-direction: column;
    align-items: center;
    width: 74px;
    margin-left: 5px;
    color: #fff;
    font: 12px/18px "Open Sans", "Noto Sans CJK SC", sans-serif;
}

.notice {
    display: flex;
    align-items: center;
    margin-left: 7px;
}

.badge {
    align-self: flex-end;
    width: 13px;
    margin: 8px 0 -5px -7px;
    border-radius: 2px;
    background: #e00000;
    color: #fff;
    text-align: center;
}

.show-desktop {
    width: 14px;
    height: 38px;
    border: 1px solid #62788f;
    background: linear-gradient(135deg, #5f7388, #243d59 50%);
}

/* widgets floating over the window */
.upload {
    position: absolute;
    top: 28px;
    right: 107px;
    display: flex;
    align-items: center;
    width: 104px;
    height: 25px;
    padding-left: 5px;
    border: 1px solid #1493ff;
    border-radius: 4px;
    background: linear-gradient(90deg, #22a0ff 29px, transparent 29px), linear-gradient(#e6f7ff, #bce8ff);
    color: #fff;
    font: 12px/16px "Noto Sans CJK SC", sans-serif;
}

.upload span {
    margin-left: 15px;
}

.meter {
    position: absolute;
    top: 526px;
    right: 2px;
    width: 8px;
    height: 57px;
    border: 1px solid #444;
    border-radius: 4px;
    background: linear-gradient(#5a5a5a 27px, transparent 27px), repeating-linear-gradient(#22c858 0 2px, #2a6a3c 2px 3px);
}
```
